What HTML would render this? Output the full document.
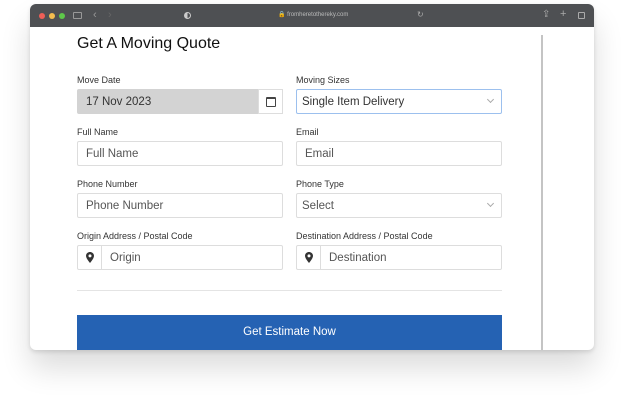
<!DOCTYPE html>
<html><head><style>
*{box-sizing:border-box;margin:0;padding:0}
body{width:624px;height:406px;background:#fff;font-family:"Liberation Sans",Arial,sans-serif;position:relative;overflow:hidden}
.win{position:absolute;left:30px;top:4px;width:564px;height:346px;border-radius:6px;background:#fff;box-shadow:0 18px 30px rgba(0,0,0,.14),0 2px 4px rgba(0,0,0,.12);overflow:hidden}
.bar{position:absolute;left:0;top:0;width:564px;height:23px;background:#4e5053}
.dot{position:absolute;top:9px;width:6px;height:6px;border-radius:50%}
.t{position:absolute;color:#aaa;font-size:9px}
.abs{position:absolute}
.lbl{position:absolute;font-size:9px;color:#333}
.fld{position:absolute;height:25px;border:1px solid #ddd;border-radius:2px;font-size:11.5px;color:#555;padding-left:8px;line-height:24px;background:#fff}
.chev{position:absolute;right:8px;top:7px;width:5px;height:5px;border-right:1px solid #aaa;border-bottom:1px solid #aaa;transform:rotate(45deg)}
.addon{position:absolute;left:0;top:0;width:24px;height:23px;border-right:1px solid #ddd}
</style></head><body>
<div class="win">
 <div class="bar">
  <div class="dot" style="left:9px;background:#ee5f57"></div>
  <div class="dot" style="left:19px;background:#f4bd4f"></div>
  <div class="dot" style="left:29px;background:#5ec84a"></div>
  <div class="abs" style="left:43px;top:8px;width:9px;height:7px;border:1px solid #999;border-radius:1px"></div>
  <div class="t" style="left:63px;top:5px;font-size:11px;color:#999">‹</div>
  <div class="t" style="left:78px;top:5px;font-size:11px;color:#666">›</div>
  <div class="abs" style="left:154px;top:8px;width:7px;height:7px;border-radius:50%;border:1px solid #ccc;background:linear-gradient(90deg,#ccc 50%,transparent 50%)"></div>
  <div class="t" style="left:248px;top:7px;font-size:6px;color:#bbb">🔒 fromheretothereky.com</div>
  <div class="t" style="left:387px;top:6px;font-size:8px">↻</div>
  <div class="t" style="left:512px;top:5px;font-size:10px">⇪</div>
  <div class="t" style="left:530px;top:4px;font-size:11px">+</div>
  <div class="abs" style="left:548px;top:8px;width:7px;height:7px;border:1px solid #aaa;border-radius:1px"></div>
 </div>
 <div class="abs" style="left:511px;top:31px;width:2px;height:320px;background:#c4c4c4"></div>
</div>
<div class="abs" style="left:77px;top:35px;font-size:16px;color:#111">Get A Moving Quote</div>

<div class="lbl" style="left:77px;top:75px">Move Date</div>
<div class="fld" style="left:77px;top:89px;width:206px;background:#d3d3d3;color:#333;border-color:#d3d3d3">17 Nov 2023
 <div class="abs" style="right:-1px;top:-1px;width:25px;height:25px;background:#fff;border:1px solid #ddd">
  <div class="abs" style="left:7px;top:7px;width:10px;height:10px;border:1.3px solid #444;border-radius:1px;border-top-width:2.5px"></div>
 </div>
</div>
<div class="lbl" style="left:296px;top:75px">Moving Sizes</div>
<div class="fld" style="left:296px;top:89px;width:206px;border-color:#9cc0ee;color:#333;padding-left:5px">Single Item Delivery<div class="chev"></div></div>

<div class="lbl" style="left:77px;top:127px">Full Name</div>
<div class="fld" style="left:77px;top:141px;width:206px">Full Name</div>
<div class="lbl" style="left:296px;top:127px">Email</div>
<div class="fld" style="left:296px;top:141px;width:206px">Email</div>

<div class="lbl" style="left:77px;top:179px">Phone Number</div>
<div class="fld" style="left:77px;top:193px;width:206px">Phone Number</div>
<div class="lbl" style="left:296px;top:179px">Phone Type</div>
<div class="fld" style="left:296px;top:193px;width:206px;padding-left:5px">Select<div class="chev"></div></div>

<div class="lbl" style="left:77px;top:231px">Origin Address / Postal Code</div>
<div class="fld" style="left:77px;top:245px;width:206px;padding-left:32px">Origin
 <div class="addon"><svg class="abs" style="left:8px;top:6px" width="8" height="11" viewBox="0 0 8 11"><path d="M4 0C1.8 0 0 1.7 0 3.9 0 6.5 4 11 4 11s4-4.5 4-7.1C8 1.7 6.2 0 4 0zm0 5.4a1.5 1.5 0 110-3 1.5 1.5 0 010 3z" fill="#333"/></svg></div></div>
<div class="lbl" style="left:296px;top:231px">Destination Address / Postal Code</div>
<div class="fld" style="left:296px;top:245px;width:206px;padding-left:32px">Destination
 <div class="addon"><svg class="abs" style="left:8px;top:6px" width="8" height="11" viewBox="0 0 8 11"><path d="M4 0C1.8 0 0 1.7 0 3.9 0 6.5 4 11 4 11s4-4.5 4-7.1C8 1.7 6.2 0 4 0zm0 5.4a1.5 1.5 0 110-3 1.5 1.5 0 010 3z" fill="#333"/></svg></div></div>

<div class="abs" style="left:77px;top:290px;width:425px;height:1px;background:#e4e4e4"></div>
<div class="abs" style="left:77px;top:315px;width:425px;height:35px;background:#2562b3;color:#fff;font-size:11.5px;text-align:center;line-height:35px">Get Estimate Now</div>
</body></html>
